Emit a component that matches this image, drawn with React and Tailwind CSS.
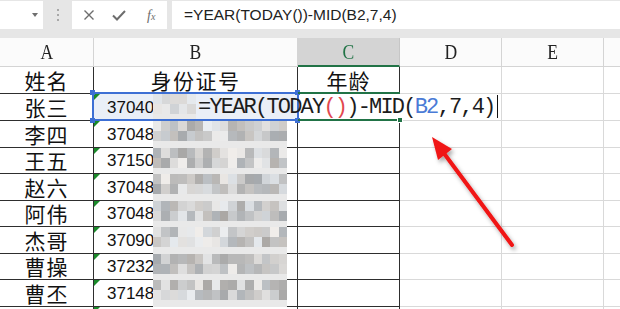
import { useMemo } from 'react'

const COLS = [94, 204, 102, 102, 102, 18]
const HEADERS = ['A', 'B', 'C', 'D', 'E', '']
const ROW_HEIGHTS = [27, 27, 27, 26, 27, 26, 27, 26, 27, 12]
const NAMES = ['姓名', '张三', '李四', '王五', '赵六', '阿伟', '杰哥', '曹操', '曹丕', '']
const IDS = ['身份证号', '37040', '37048', '37150', '37048', '37048', '37090', '37232', '37148', '']

const CJK = "font-['Noto_Sans_CJK_SC',sans-serif]"

// seeded grays for the blurred id numbers
const rand = (seed) => {
  let s = seed
  return () => {
    s = (s * 9301 + 49297) % 233280
    return s / 233280
  }
}

function Mosaic({ cols, seed, light }) {
  const cells = useMemo(() => {
    const r = rand(seed)
    return [0, 1].map(() =>
      Array.from({ length: cols }, () => {
        const v = light ? 205 + Math.floor(r() * 35) : 168 + Math.floor(r() * 70)
        const t = Math.floor(r() * 8) - 4
        return `rgb(${v + t},${v},${v - t})`
      }),
    )
  }, [cols, seed, light])
  return (
    <div className="flex h-full flex-col">
      {cells.map((row, i) => (
        <div key={i} className="flex h-[10px]">
          {row.map((c, j) => (
            <div key={j} className="flex-1" style={{ background: c }} />
          ))}
        </div>
      ))}
      <div className="flex-1 bg-[#e9e9e9]" />
    </div>
  )
}

function Toolbar() {
  return (
    <div className="flex h-[30px] py-px">
      <div className="relative w-[43px] bg-white">
        <div className="absolute left-[32px] top-[12px] h-0 w-0 border-x-[3px] border-t-[4px] border-x-transparent border-t-[#6f6f6f]" />
      </div>
      <div className="flex w-[29px] flex-col items-center justify-center gap-[3px]">
        <div className="h-[2px] w-[2px] bg-[#a8a8a8]" />
        <div className="h-[2px] w-[2px] bg-[#a8a8a8]" />
        <div className="h-[2px] w-[2px] bg-[#a8a8a8]" />
      </div>
      <div className="flex w-[95px] items-center bg-white">
        <svg width="12" height="12" viewBox="0 0 12 12" className="ml-[11px]">
          <path d="M1.5 1.5 L10.5 10.5 M10.5 1.5 L1.5 10.5" stroke="#6d6d6d" strokeWidth="1.4" fill="none" />
        </svg>
        <svg width="14" height="11" viewBox="0 0 14 11" className="ml-[17px]">
          <path d="M1 5.5 L5 9.5 L13 1" stroke="#6d6d6d" strokeWidth="2" fill="none" />
        </svg>
        <span className="ml-[21px] font-['Liberation_Serif',serif] text-[14px] italic text-[#6d6d6d]">
          f<span className="text-[10px]">x</span>
        </span>
      </div>
      <div className="ml-[5px] flex flex-1 items-center bg-white pl-[12px] font-['Liberation_Sans',sans-serif] text-[15.5px] text-[#222]">
        =YEAR(TODAY())-MID(B2,7,4)
      </div>
    </div>
  )
}

function HeaderRow() {
  return (
    <div className="flex h-[29px] bg-[#fbfbfb]">
      {COLS.map((w, i) => (
        <div
          key={i}
          style={{ width: w }}
          className={`flex shrink-0 items-center justify-center border-b border-r font-['Liberation_Serif',serif] text-[22px] leading-none ${
            i === 2
              ? 'border-b-2 border-b-[#217346] border-r-[#c6c6c6] bg-[#d4d4d4] text-[#217346]'
              : 'border-b-[#d4d4d4] border-r-[#d4d4d4] text-[#222]'
          }`}
        >
          <span className="scale-x-[0.8]">{HEADERS[i]}</span>
        </div>
      ))}
    </div>
  )
}

function BodyRow({ index, height }) {
  const dark = 'border-b border-r border-[#2e2e2e]'
  const light = 'border-b border-r border-[#d9d9d9]'
  const edit = index === 1
  const title = index === 0
  return (
    <div className="flex" style={{ height }}>
      <div
        style={{ width: COLS[0] }}
        className={`flex shrink-0 items-center justify-center ${dark} bg-white ${CJK} text-[21px] leading-none tracking-[1px] text-[#111]`}
      >
        {NAMES[index]}
      </div>
      <div
        style={{ width: COLS[1] }}
        className={`relative flex shrink-0 items-center ${dark} ${edit ? 'bg-[#eaeff7]' : 'bg-white'} ${
          title
            ? `justify-center ${CJK} text-[21px] tracking-[1.5px]`
            : "pl-[13px] font-['Liberation_Sans',sans-serif] text-[17px]"
        } leading-none text-[#111]`}
      >
        {index > 0 && (
          <div className="absolute left-0 top-0 h-0 w-0 border-r-[6px] border-t-[6px] border-r-transparent border-t-[#1a8a2a]" />
        )}
        {IDS[index]}
        {index > 0 && index < 9 && (
          <div
            className={`absolute top-0 ${edit ? 'left-[59px] w-[43px]' : 'left-[59px] w-[134px]'} bottom-[-1px]`}
          >
            <Mosaic cols={edit ? 5 : 16} seed={index * 131 + 7} light={edit} />
          </div>
        )}
        {edit && (
          <span className="absolute left-[104px] top-[2px] z-20 whitespace-nowrap font-['Liberation_Mono',monospace] text-[22px] leading-[24px] tracking-[-1.8px] text-[#1c1c1c]">
            =YEAR(TODAY<span className="text-[#e2484f]">()</span>)-MID(<span className="text-[#4a7bd6]">B2</span>,7,4)
          </span>
        )}
      </div>
      <div
        style={{ width: COLS[2] }}
        className={`flex shrink-0 items-center justify-center bg-white ${dark} ${edit ? 'border-r-transparent' : ''} ${CJK} text-[21px] leading-none tracking-[1px] text-[#111]`}
      >
        {title ? '年龄' : ''}
      </div>
      <div style={{ width: COLS[3] }} className={`shrink-0 bg-white ${light}`} />
      <div style={{ width: COLS[4] }} className={`shrink-0 bg-white ${light}`} />
      <div style={{ width: COLS[5] }} className={`shrink-0 bg-white ${light}`} />
    </div>
  )
}

function Arrow() {
  return (
    <svg className="pointer-events-none absolute left-0 top-0" width="620" height="309">
      <defs>
        <filter id="sh" x="-50%" y="-50%" width="200%" height="200%">
          <feDropShadow dx="2" dy="3" stdDeviation="2" floodColor="#000" floodOpacity="0.35" />
        </filter>
      </defs>
      <g filter="url(#sh)">
        <line x1="512" y1="245" x2="443" y2="152" stroke="#f01414" strokeWidth="4" strokeLinecap="round" />
        <polygon points="432,137 452,149 438,160" fill="#f01414" />
      </g>
    </svg>
  )
}

export default function App() {
  return (
    <div className="relative h-[309px] w-[620px] overflow-hidden bg-[#e6e6e6]">
      <Toolbar />
      <div className="h-[8px]" />
      <HeaderRow />
      <div className="relative">
        {ROW_HEIGHTS.map((h, i) => (
          <BodyRow key={i} index={i} height={h} />
        ))}
        {/* reference box around B2 */}
        <div className="absolute left-[92px] top-[25px] z-10 h-[29px] w-[207px] border-2 border-[#3d6fd4]" />
        {[
          'left-[90px] top-[23px]',
          'left-[295px] top-[23px]',
          'left-[90px] top-[51px]',
          'left-[295px] top-[51px]',
        ].map((p) => (
          <div key={p} className={`absolute z-10 h-[5px] w-[5px] bg-[#3d6fd4] ${p}`} />
        ))}
        {/* active cell C2 */}
        <div className="absolute left-[298px] top-[25px] z-10 h-[2px] w-[102px] bg-[#217346]" />
        <div className="absolute left-[298px] top-[52px] z-10 h-[2px] w-[102px] bg-[#217346]" />
        <div className="absolute left-[397px] top-[50px] z-10 h-[6px] w-[6px] border border-white bg-[#217346]" />
        <div className="absolute left-[497px] top-[28px] z-20 h-[23px] w-px bg-[#111]" />
      </div>
      <Arrow />
    </div>
  )
}
